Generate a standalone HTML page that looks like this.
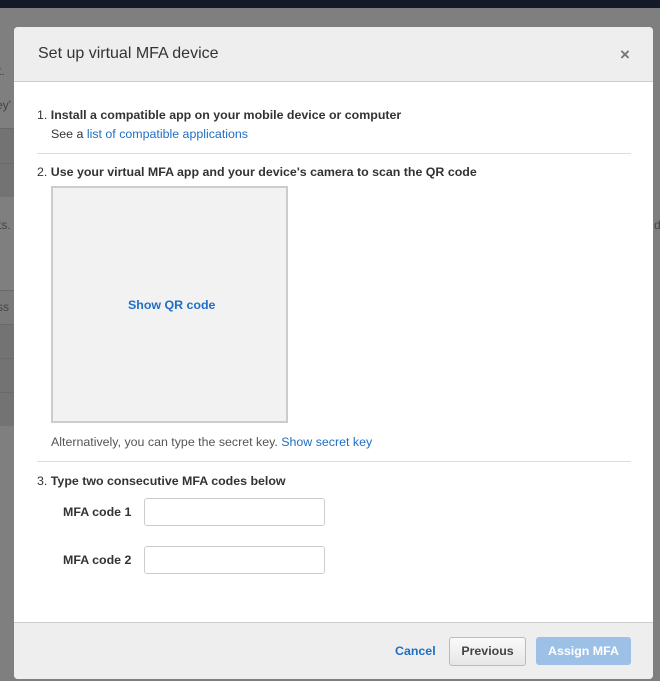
<!DOCTYPE html>
<html style="background:#7f7f7f"><head><style>
body{margin:0;width:660px;height:681px;background:#7f7f7f;position:relative;overflow:hidden;font-family:"Liberation Sans",sans-serif;}
.a{position:absolute}
.t{font-size:12.4px;color:#333;white-space:nowrap}
b{font-weight:bold}
.lk{color:#1f6fc5}
.band{position:absolute;left:0;width:14px;background:#737373;border-top:1px solid #6a6a6a}
</style></head><body>
<div class="a" style="left:0;top:0;width:660px;height:8px;background:#151b26"></div>
<div class="band" style="top:128px;height:34px"></div>
<div class="band" style="top:163px;height:33px"></div>
<div class="band" style="top:290px;height:33px;background:#7a7a7a"></div>
<div class="band" style="top:324px;height:33px"></div>
<div class="band" style="top:358px;height:33px"></div>
<div class="band" style="top:392px;height:33px"></div>
<div class="a" style="left:-2px;top:64px;font-size:12px;color:#444">t.</div>
<div class="a" style="left:-4px;top:98px;font-size:12px;color:#444">ey'</div>
<div class="a" style="left:-2px;top:218px;font-size:12px;color:#444">ts.</div>
<div class="a" style="left:-3px;top:300px;font-size:12px;color:#444">ss</div>
<div class="a" style="left:654px;top:218px;font-size:12px;color:#444">de</div>

<div class="a" style="left:14px;top:27px;width:639px;height:652px;background:#fff;border-radius:4px;overflow:hidden">
 <div class="a" style="left:0;top:0;width:639px;height:54px;background:#eee;border-bottom:1px solid #ccc"></div>
 <div class="a" style="left:24px;top:18px;font-size:16px;color:#333">Set up virtual MFA device</div>
 <div class="a" style="left:606px;top:18px;font-size:17px;color:#777;font-weight:bold">×</div>
 <div class="a" style="left:0;top:595px;width:639px;height:57px;background:#eee;border-top:1px solid #ccc"></div>
</div>

<div class="a t" style="left:37px;top:108px">1. <b>Install a compatible app on your mobile device or computer</b></div>
<div class="a t" style="left:51px;top:127px">See a <span class="lk">list of compatible applications</span></div>
<div class="a" style="left:37px;top:153px;width:594px;height:1px;background:#ddd"></div>
<div class="a t" style="left:37px;top:165px">2. <b>Use your virtual MFA app and your device's camera to scan the QR code</b></div>
<div class="a" style="left:51px;top:186px;width:233px;height:233px;border:2px solid #ccc;background:#f2f2f2"></div>
<div class="a t lk" style="left:128px;top:298px;font-weight:bold">Show QR code</div>
<div class="a t" style="left:51px;top:435px;color:#555">Alternatively, you can type the secret key. <span class="lk">Show secret key</span></div>
<div class="a" style="left:37px;top:461px;width:594px;height:1px;background:#ddd"></div>
<div class="a t" style="left:37px;top:474px">3. <b>Type two consecutive MFA codes below</b></div>
<div class="a t" style="left:63px;top:505px;font-weight:bold">MFA code 1</div>
<div class="a" style="left:144px;top:498px;width:179px;height:26px;border:1px solid #ccc;border-radius:3px"></div>
<div class="a t" style="left:63px;top:553px;font-weight:bold">MFA code 2</div>
<div class="a" style="left:144px;top:546px;width:179px;height:26px;border:1px solid #ccc;border-radius:3px"></div>

<div class="a t lk" style="left:395px;top:644px;font-weight:bold">Cancel</div>
<div class="a" style="left:449px;top:637px;width:75px;height:27px;border:1px solid #bbb;border-radius:3px;background:linear-gradient(#fafafa,#e6e6e6);font-size:12.4px;font-weight:bold;color:#444;text-align:center;line-height:27px">Previous</div>
<div class="a" style="left:536px;top:637px;width:95px;height:28px;border-radius:3px;background:#9dc0e6;font-size:12.4px;font-weight:bold;color:#fff;text-align:center;line-height:28px">Assign MFA</div>
</body></html>
